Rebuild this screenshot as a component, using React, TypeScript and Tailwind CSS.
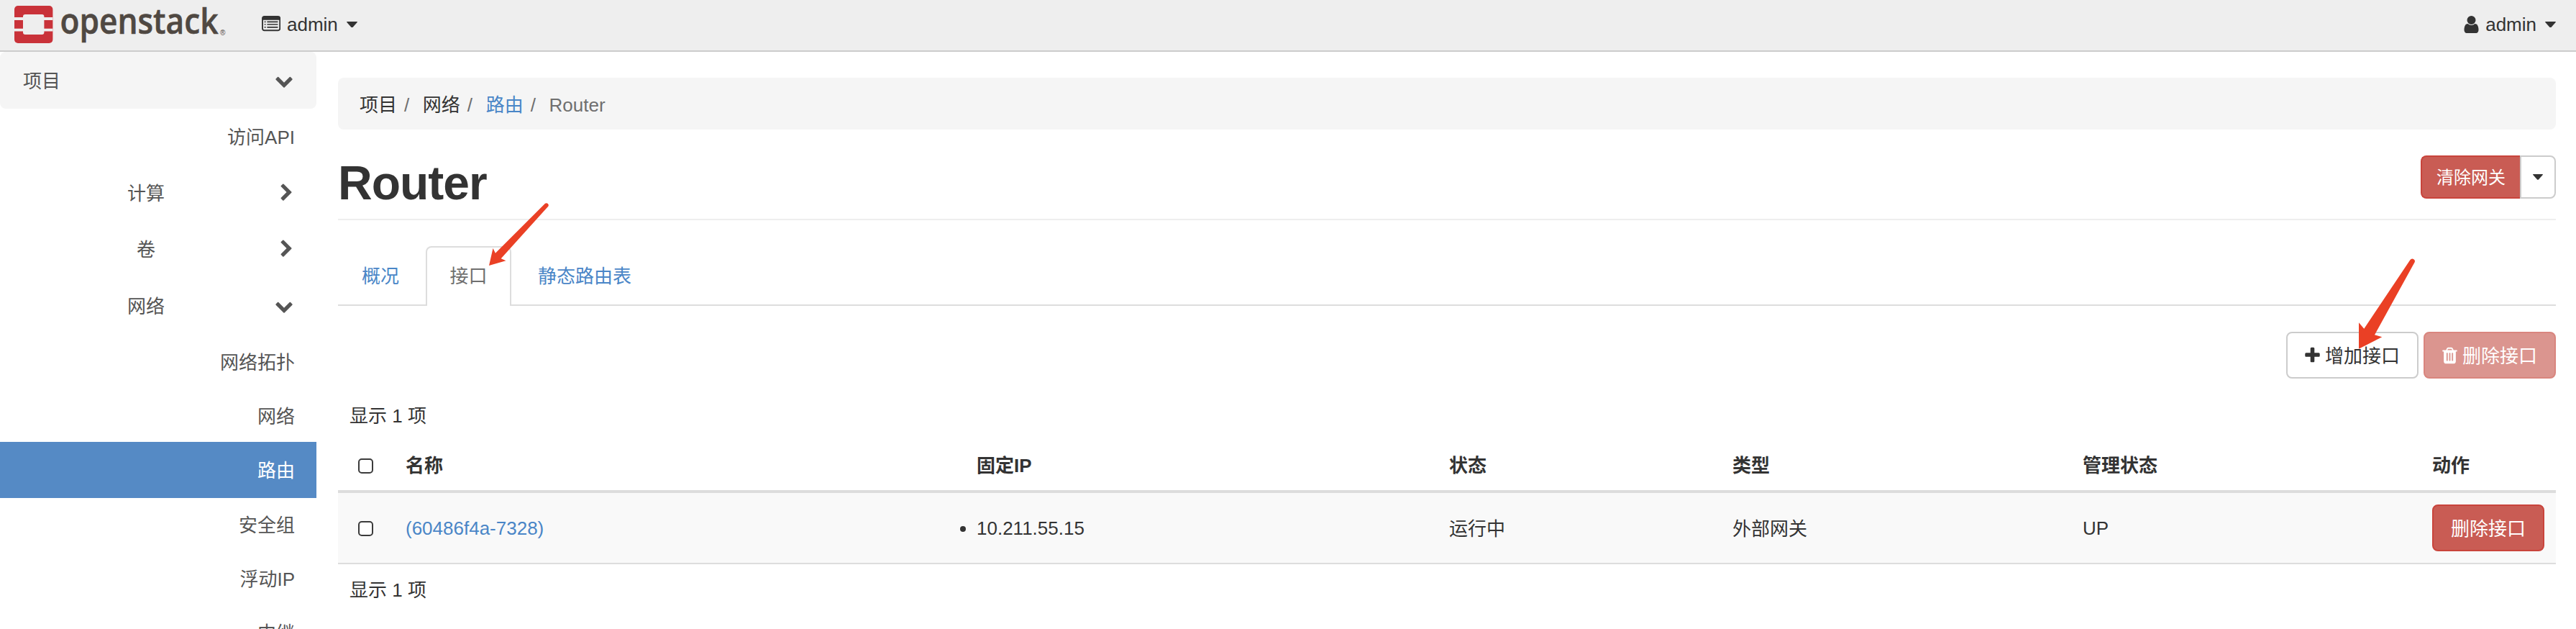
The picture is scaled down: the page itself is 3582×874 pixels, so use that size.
import React from "react";

interface IconProps {
  name: keyof typeof icons;
  className?: string;
}

const icons = {
  chevronDown: {
    viewBox: "0 0 1792 1792",
    path: "M1683 808l-742 741q-19 19-45 19t-45-19l-742-741q-19-19-19-45.5t19-45.5l166-165q19-19 45-19t45 19l531 531 531-531q19-19 45-19t45 19l166 165q19 19 19 45.5t-19 45.5z",
  },
  chevronRight: {
    viewBox: "256 0 1280 1792",
    path: "M1363 877l-742 742q-19 19-45 19t-45-19l-166-166q-19-19-19-45t19-45l531-531-531-531q-19-19-19-45t19-45l166-166q19-19 45-19t45 19l742 742q19 19 19 45t-19 45z",
  },
  plus: {
    viewBox: "192 0 1408 1792",
    path: "M1600 736v192q0 40-28 68t-68 28h-416v416q0 40-28 68t-68 28h-192q-40 0-68-28t-28-68v-416h-416q-40 0-68-28t-28-68v-192q0-40 28-68t68-28h416v-416q0-40 28-68t68-28h192q40 0 68 28t28 68v416h416q40 0 68 28t28 68z",
  },
  trash: {
    viewBox: "192 0 1408 1792",
    path: "M704 1376v-704q0-14-9-23t-23-9h-64q-14 0-23 9t-9 23v704q0 14 9 23t23 9h64q14 0 23-9t9-23zm256 0v-704q0-14-9-23t-23-9h-64q-14 0-23 9t-9 23v704q0 14 9 23t23 9h64q14 0 23-9t9-23zm256 0v-704q0-14-9-23t-23-9h-64q-14 0-23 9t-9 23v704q0 14 9 23t23 9h64q14 0 23-9t9-23zm-544-992h448l-48-117q-7-9-17-11h-317q-10 2-17 11zm928 32v64q0 14-9 23t-23 9h-96v948q0 83-47 143.5t-113 60.5h-832q-66 0-113-58.5t-47-141.5v-952h-96q-14 0-23-9t-9-23v-64q0-14 9-23t23-9h309l70-167q15-37 54-63t79-26h320q40 0 79 26t54 63l70 167h309q14 0 23 9t9 23z",
  },
  user: {
    viewBox: "256 0 1280 1792",
    path: "M1536 1399q0 109-62.5 187t-150.5 78h-854q-88 0-150.5-78t-62.5-187q0-85 8.5-160.5t31.5-152 58.5-131 94-89 134.5-34.5q131 128 313 128t313-128q76 0 134.5 34.5t94 89 58.5 131 31.5 152 8.5 160.5zm-256-887q0 159-112.5 271.5t-271.5 112.5-271.5-112.5-112.5-271.5 112.5-271.5 271.5-112.5 271.5 112.5 112.5 271.5z",
  },
  caret: {
    viewBox: "0 0 15 8.4",
    path: "M.6 0h13.8q.8.3.3 1l-6.2 6.9q-1 .9-2 0L.3 1Q-.2.3.6 0z",
  },
};

const Icon: React.FC<IconProps> = ({ name, className }) => (
  <svg
    viewBox={icons[name].viewBox}
    className={`shrink-0 ${className || ""}`}
    fill="currentColor"
  >
    <path d={icons[name].path} />
  </svg>
);

const ListIcon: React.FC = () => (
  <svg viewBox="0 0 26 22" className="-mt-1 w-[26px] h-[22px] shrink-0">
    <rect x="1" y="1" width="24.2" height="19.2" rx="2.4" fill="none" stroke="#333" strokeWidth="1.9" />
    <path d="M1 2h24v3.8H1z" fill="#333" />
    <path
      d="M3.7 8.4h1.8M3.7 12h1.8M3.7 15.8h1.8M7.4 8.4h15M7.4 12h15M7.4 15.8h15"
      stroke="#333"
      strokeWidth="1.7"
    />
  </svg>
);

const Logo: React.FC = () => (
  <svg viewBox="0 0 300 70" className="w-[300px] h-[70px] shrink-0">
    <rect y="8" width="53.4" height="52" rx="5" fill="#c93239" />
    <path d="M0 24h53.4v4H0zM0 39.8h53.4v3.8H0z" fill="#eee" />
    <rect x="12" y="20" width="29.4" height="28" rx="3" fill="#eee" />
    <text
      x="63.5"
      y="47.3"
      textLength="220"
      lengthAdjust="spacingAndGlyphs"
      className="font-['Open_Sans',sans-serif] text-[48px] font-semibold"
      fill="#4f4842"
      stroke="#4f4842"
      strokeWidth="0.6"
    >
      openstack
    </text>
    <text x="286" y="49" className="font-['Liberation_Sans',sans-serif] text-[10px]" fill="#4f4842">
      ®
    </text>
  </svg>
);

const menu = [
  { label: "访问API", className: "h-[78px]" },
  { label: "计算", className: "h-[77px]", icon: "chevronRight" },
  { label: "卷", className: "h-[79px]", icon: "chevronRight" },
  { label: "网络", className: "h-[79px]", icon: "chevronDown" },
  { label: "网络拓扑", className: "h-[77px]" },
  { label: "网络", className: "h-[73px]" },
  { label: "路由", className: "h-[78px] bg-[#558ac5] text-white" },
  { label: "安全组", className: "h-[73px]" },
  { label: "浮动IP", className: "h-[77px]" },
  { label: "中继", className: "h-[74px]" },
];

const Chevron: React.FC<{ open: boolean }> = ({ open }) =>
  open ? (
    <Icon name="chevronDown" className="w-[26px] h-[26px]" />
  ) : (
    <Icon name="chevronRight" className="w-[19px] h-[26px]" />
  );

const Sidebar: React.FC = () => (
  <aside className="w-[440px] shrink-0 text-[#555]">
    <div className="flex h-[79px] items-center justify-between rounded-lg bg-[#f5f5f5] px-8">
      <span className="pt-[2px]">项目</span>
      <Chevron open />
    </div>
    {menu.map(({ label, className, icon }, i) => (
      <div key={i} className={`flex items-center ${className}`}>
        {icon ? (
          <>
            <span className="ml-[16px] w-[374px] pt-[2px] text-center">{label}</span>
            <span className="-ml-2 flex flex-1 justify-end pr-8">
              <Chevron open={icon === "chevronDown"} />
            </span>
          </>
        ) : (
          <span className="flex-1 pr-[30px] pt-[2px] text-right">{label}</span>
        )}
      </div>
    ))}
  </aside>
);

const Checkbox: React.FC = () => (
  <span className="mt-[1px] block h-[21px] w-[21px] rounded-[5px] border-2 border-[#3b3b3b] bg-white" />
);

const columns =
  "grid grid-cols-[78px_794px_657px_394px_487px_486px_188px] items-center";

const App: React.FC = () => (
  <div className="relative h-[874px] w-[3582px] overflow-hidden bg-white font-['Liberation_Sans','Noto_Sans_CJK_SC',sans-serif] text-[26px] leading-[36px] text-[#333]">
    <header className="flex h-[72px] items-center border-b-2 border-[#ccc] bg-[#eee] pl-5 pr-[28px]">
      <Logo />
      <div className="ml-[44px] flex items-center">
        <ListIcon />
        <span className="ml-[9px] mt-[-2px]">admin</span>
        <Icon name="caret" className="-mt-[2px] ml-3 w-[15px] h-[8.4px]" />
      </div>
      <div className="ml-auto flex items-center">
        <Icon name="user" className="-mt-[3px] w-[21px] h-[28px]" />
        <span className="ml-[9px] mt-[-2px]">admin</span>
        <Icon name="caret" className="-mt-[2px] ml-3 w-[15px] h-[8.4px]" />
      </div>
    </header>

    <div className="flex">
      <Sidebar />
      <main className="ml-[30px] w-[3084px]">
        <nav className="mt-[36px] flex h-[72px] items-center rounded-lg bg-[#f5f5f5] px-[30px] pt-1 text-[#6f6f6f]">
          <span className="text-[#333]">项目</span>
          <span className="ml-[10px] mr-[18.6px]">/</span>
          <span className="text-[#333]">网络</span>
          <span className="ml-[10px] mr-[18.6px]">/</span>
          <a className="text-[#4a86c7]">路由</a>
          <span className="ml-[10px] mr-[18.6px]">/</span>
          <span>Router</span>
        </nav>

        <div className="flex h-[126px] justify-between border-b-2 border-[#eee] pt-9">
          <h1 className="mt-[2px] text-[66px] leading-[72px] font-bold tracking-[-1px]">Router</h1>
          <div className="flex h-[60px] text-[24px]">
            <button className="w-[138px] rounded-l-lg border-2 border-r-0 border-[#c9443c] bg-[#c95c54] pt-[2px] text-white">
              清除网关
            </button>
            <button className="flex w-[50px] items-center justify-center rounded-r-lg border-2 border-[#ccc]">
              <Icon name="caret" className="w-[14px] h-[8px]" />
            </button>
          </div>
        </div>

        <div className="mt-9 flex h-[83px] border-b-2 border-[#ddd] text-[#4a86c7]">
          <a className="flex w-[122px] items-center pl-[33px] pt-[3px]">概况</a>
          <a className="-mb-[2px] flex w-[119px] items-center justify-center rounded-t-lg border-2 border-b-0 border-[#ddd] bg-white pb-[1px] text-[#6f6f6f]">
            接口
          </a>
          <a className="flex items-center pl-[37px] pt-[3px]">静态路由表</a>
        </div>

        <div className="mt-9 flex justify-end gap-[7px]">
          <button className="flex h-[65px] w-[184px] items-center rounded-lg border-2 border-[#ccc] pl-6">
            <Icon name="plus" className="mr-[7px] w-[21px] h-[26px]" />
            <span className="pt-[2px]">增加接口</span>
          </button>
          <button className="flex h-[65px] w-[184px] items-center rounded-lg border-2 border-[#d9857e] bg-[#db958f] pl-6 text-white">
            <Icon name="trash" className="mr-[7px] w-[21px] h-[26px]" />
            <span className="pt-[2px]">删除接口</span>
          </button>
        </div>

        <div className="mt-[34px] h-[51px] pl-4">显示 1 项</div>
        <div className={`${columns} h-[74px] border-b-4 border-[#ddd] pt-[2px] font-bold`}>
          <span className="pl-[28px]">
            <Checkbox />
          </span>
          <span className="pl-4">名称</span>
          <span className="pl-4">固定IP</span>
          <span className="pl-4">状态</span>
          <span className="pl-4">类型</span>
          <span className="pl-4">管理状态</span>
          <span className="pl-4">动作</span>
        </div>
        <div className={`${columns} h-[99px] border-b-2 border-[#ddd] bg-[#f9f9f9]`}>
          <span className="pl-[28px]">
            <Checkbox />
          </span>
          <a className="pl-4 pt-[1px] text-[#4a86c7]">(60486f4a-7328)</a>
          <span className="-ml-[7px] flex items-center pt-[1px]">
            <i className="mr-[15px] mt-[2px] h-2 w-2 rounded-full bg-[#333]" />
            10.211.55.15
          </span>
          <span className="pl-4 pt-[2px]">运行中</span>
          <span className="pl-4 pt-[2px]">外部网关</span>
          <span className="pl-4 pt-[1px]">UP</span>
          <span className="pl-4">
            <button className="block h-[65px] w-[156px] rounded-lg border-2 border-[#c9443c] bg-[#c95c54] pt-[2px] text-white">
              删除接口
            </button>
          </span>
        </div>
        <div className="mt-[18px] pl-4">显示 1 项</div>
      </main>
    </div>

    {/* pointer arrows laid over the page */}
    <svg viewBox="0 0 90 92" className="absolute left-[676px] top-[280px] h-[92px] w-[90px]" fill="#ea4025">
      <path d="M4 89L9.5 65l3.4 6.7L82 2.7q2-1.2 3.8.3t.7 3.6L20.7 79.3l6.8 3z" />
    </svg>
    <svg viewBox="0 0 90 132" className="absolute left-[3276px] top-[356px] h-[132px] w-[90px]" fill="#ea4025">
      <path d="M4 128.7V92.3l7.3 8.4L75.3 5.3q2-2.5 4.7-1.3t1.7 4.3L26 109.3l10.3 3z" />
    </svg>
  </div>
);

export default App;
